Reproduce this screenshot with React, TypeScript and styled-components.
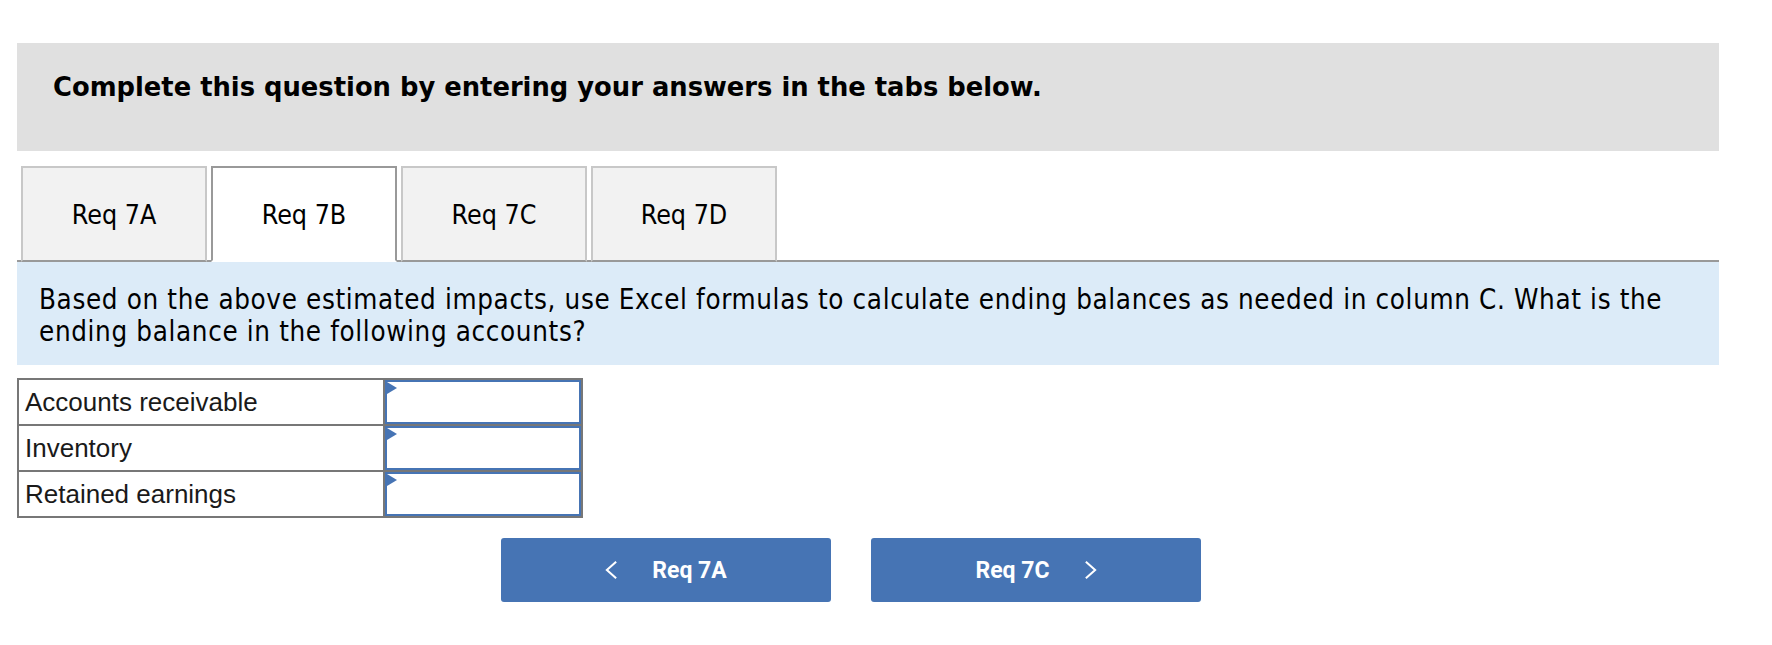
import { useState } from 'react';
import styled, { createGlobalStyle } from 'styled-components';

const GlobalStyle = createGlobalStyle`
  body {
    margin: 0;
    background: #ffffff;
    color: #000000;
  }
`;

const tabs = ['Req 7A', 'Req 7B', 'Req 7C', 'Req 7D'];
const accounts = ['Accounts receivable', 'Inventory', 'Retained earnings'];

function App() {
  const [current, setCurrent] = useState(1);
  const [values, setValues] = useState<string[]>(['', '', '']);

  const prev = current > 0 ? tabs[current - 1] : null;
  const next = current < tabs.length - 1 ? tabs[current + 1] : null;

  return (
    <Page>
      <GlobalStyle />
      <Instructions>Complete this question by entering your answers in the tabs below.</Instructions>

      <TabBar>
        {tabs.map((t, i) => (
          <Tab key={t} active={i === current} onClick={() => setCurrent(i)}>
            {t}
          </Tab>
        ))}
      </TabBar>

      <Prompt>
        Based on the above estimated impacts, use Excel formulas to calculate ending balances as needed in column C.
        What is the ending balance in the following accounts?
      </Prompt>

      <AnswerGrid>
        {accounts.map((a, i) => (
          <Row key={a}>
            <Label>{a}</Label>
            <InputCell>
              <AnswerInput
                value={values[i]}
                onChange={(e) => {
                  const copy = [...values];
                  copy[i] = e.target.value;
                  setValues(copy);
                }}
              />
            </InputCell>
          </Row>
        ))}
      </AnswerGrid>

      <NavRow>
        <NavButton onClick={() => prev && setCurrent(current - 1)}>
          <Chevron viewBox="0 0 14 20">
            <polyline points="12,1 2,10 12,19" />
          </Chevron>
          {prev ?? tabs[0]}
        </NavButton>
        <NavButton onClick={() => next && setCurrent(current + 1)}>
          {next ?? tabs[tabs.length - 1]}
          <Chevron viewBox="0 0 14 20">
            <polyline points="2,1 12,10 2,19" />
          </Chevron>
        </NavButton>
      </NavRow>
    </Page>
  );
}

// Tahoma-ish stack for the question text
const tahoma = `"DejaVu Sans Condensed", "DejaVu Sans", Verdana, sans-serif`;

const Page = styled.div`
  padding: 43px 53px 40px 17px;
`;

const Instructions = styled.div`
  background-color: #e0e0e0;
  padding: 28px 36px 47px;
  font-family: 'DejaVu Sans', Verdana, sans-serif;
  font-weight: 700;
  font-size: 25.8px;
  line-height: 33px;
`;

const TabBar = styled.div`
  display: flex;
  gap: 4px;
  margin-top: 15px;
  padding-left: 4px;
  border-bottom: 2px solid #999999;
`;

const Tab = styled.button<{ active: boolean }>`
  width: 186px;
  height: 96px;
  margin-bottom: -2px;
  box-sizing: border-box;
  display: flex;
  align-items: center;
  justify-content: center;
  padding: 0;
  font-family: ${tahoma};
  font-stretch: condensed;
  font-size: 26.6px;
  color: #000000;
  cursor: pointer;
  background-color: ${({ active }) => (active ? '#ffffff' : '#f2f2f2')};
  border: 2px solid ${({ active }) => (active ? '#999999' : '#c8c8c8')};
  border-bottom: 2px solid ${({ active }) => (active ? '#ffffff' : '#999999')};
`;

const Prompt = styled.div`
  background-color: #dcebf8;
  padding: 20.5px 22px 18.5px;
  font-family: ${tahoma};
  font-stretch: condensed;
  font-size: 27.5px;
  letter-spacing: 0.65px;
  line-height: 32px;
`;

const AnswerGrid = styled.div`
  margin-top: 13px;
  display: grid;
  grid-template-columns: 364px 196px;
  gap: 2px;
  padding: 2px;
  width: fit-content;
  background-color: #777777;
`;

const Row = styled.div`
  display: contents;
`;

const Label = styled.div`
  height: 44px;
  background: #ffffff;
  display: flex;
  align-items: center;
  padding-left: 6px;
  font-family: 'Liberation Sans', Arial, sans-serif;
  font-size: 26px;
  color: #1a1a1a;
`;

const InputCell = styled.div`
  position: relative;
  height: 44px;
  background: #ffffff;

  &::after {
    content: '';
    position: absolute;
    left: 2px;
    top: 2px;
    border-top: 6px solid transparent;
    border-bottom: 6px solid transparent;
    border-left: 10px solid #4674b4;
  }
`;

const AnswerInput = styled.input`
  box-sizing: border-box;
  width: 100%;
  height: 100%;
  margin: 0;
  border: 2px solid #4674b4;
  outline: none;
  padding: 0 8px;
  font-family: 'Liberation Sans', Arial, sans-serif;
  font-size: 22px;
  text-align: right;
`;

const NavRow = styled.div`
  display: flex;
  justify-content: center;
  gap: 40px;
  margin-top: 20px;
  padding-right: 34px;
`;

const NavButton = styled.button`
  width: 330px;
  height: 64px;
  display: flex;
  align-items: center;
  justify-content: center;
  gap: 34px;
  background-color: #4674b4;
  border: none;
  border-radius: 3px;
  color: #ffffff;
  font-family: Roboto, 'Liberation Sans', sans-serif;
  font-weight: 700;
  font-size: 23px;
  cursor: pointer;
`;

const Chevron = styled.svg`
  width: 13px;
  height: 20px;
  fill: none;
  stroke: #ffffff;
  stroke-width: 2.2;
`;

export default App;
